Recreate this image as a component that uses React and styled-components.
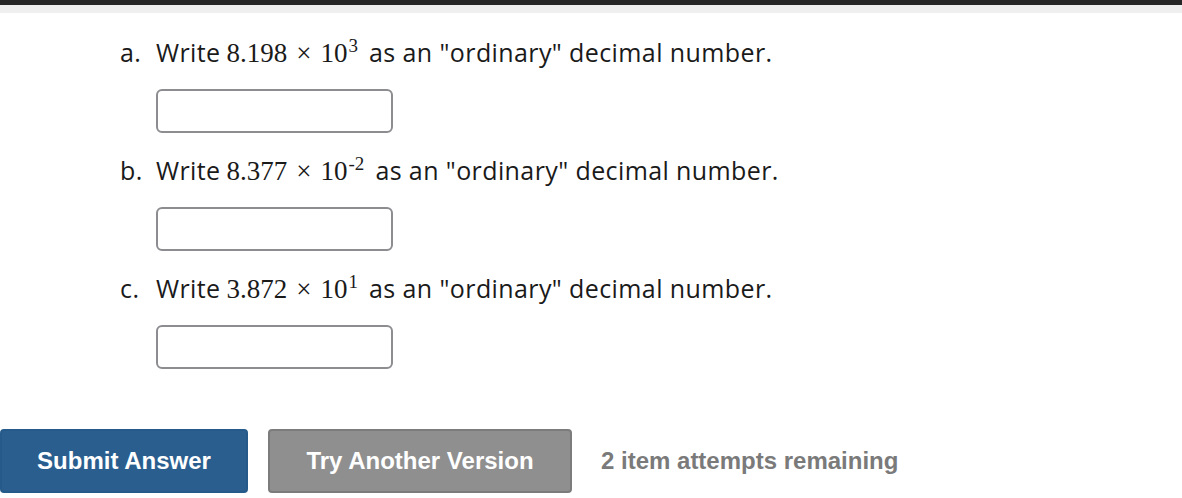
import React from 'react';
import styled, { createGlobalStyle } from 'styled-components';

const GlobalStyle = createGlobalStyle`
  html, body {
    margin: 0;
    padding: 0;
    background: #ffffff;
  }
  body {
    font-family: "Open Sans", "Noto Sans", sans-serif;
    color: #1a1a1a;
  }
`;

const TopBar = styled.div`
  height: 5px;
  background: #262626;
`;

const SubBar = styled.div`
  height: 8px;
  background: #efefef;
`;

const Questions = styled.ol`
  list-style: none;
  margin: 0;
  padding: 24px 0 0 120px;
  display: flex;
  flex-direction: column;
  gap: 22px;
`;

const Item = styled.li`
  display: flex;
  flex-direction: column;
  gap: 22px;
`;

const Prompt = styled.div`
  font-size: 25px;
  letter-spacing: 0.4px;
  line-height: 30px;
  height: 30px;
  white-space: nowrap;
  display: flex;
  align-items: baseline;
`;

const Letter = styled.span`
  display: inline-block;
  width: 36px;
`;

const Math = styled.span`
  font-family: "Liberation Serif", "DejaVu Serif", serif;
  font-size: 27px;
  letter-spacing: 0;
  margin: 0 11px 0 6px;
  sup {
    font-size: 19px;
    line-height: 0;
    vertical-align: 10px;
    margin-left: 1px;
  }
`;

const Times = styled.span`
  margin: 0 9px;
`;

const AnswerBox = styled.input`
  margin-left: 36px;
  width: 237px;
  height: 44px;
  box-sizing: border-box;
  border: 2px solid #8d8d91;
  border-radius: 6px;
  background: #fff;
  font-family: inherit;
  font-size: 18px;
  padding: 0 10px;
  outline: none;
`;

const Actions = styled.div`
  display: flex;
  align-items: center;
  gap: 20px;
  margin-top: 60px;
  font-family: "Liberation Sans", Arial, sans-serif;
`;

const Button = styled.button`
  height: 64px;
  box-sizing: border-box;
  border-radius: 4px;
  font-family: inherit;
  font-weight: bold;
  font-size: 24px;
  color: #ffffff;
  border: 2px solid ${p => (p.$primary ? '#265a8a' : '#7c7c7c')};
  background: ${p => (p.$primary ? '#295e8f' : '#8f8f8f')};
  width: ${p => p.$width}px;
  padding: 0;
  cursor: pointer;
`;

const Remaining = styled.span`
  margin-left: 9px;
  font-size: 24px;
  font-weight: bold;
  color: #7a7a7a;
`;

const questions = [
  { letter: 'a.', base: '8.198', exp: '3' },
  { letter: 'b.', base: '8.377', exp: '-2' },
  { letter: 'c.', base: '3.872', exp: '1' },
];

export default function App() {
  return (
    <>
      <GlobalStyle />
      <TopBar />
      <SubBar />
      <Questions>
        {questions.map(q => (
          <Item key={q.letter}>
            <Prompt>
              <Letter>{q.letter}</Letter>
              Write
              <Math>
                {q.base}
                <Times>×</Times>
                10<sup>{q.exp}</sup>
              </Math>
              as an "ordinary" decimal number.
            </Prompt>
            <AnswerBox type="text" />
          </Item>
        ))}
      </Questions>
      <Actions>
        <Button $primary $width={248}>Submit Answer</Button>
        <Button $width={304}>Try Another Version</Button>
        <Remaining>2 item attempts remaining</Remaining>
      </Actions>
    </>
  );
}
